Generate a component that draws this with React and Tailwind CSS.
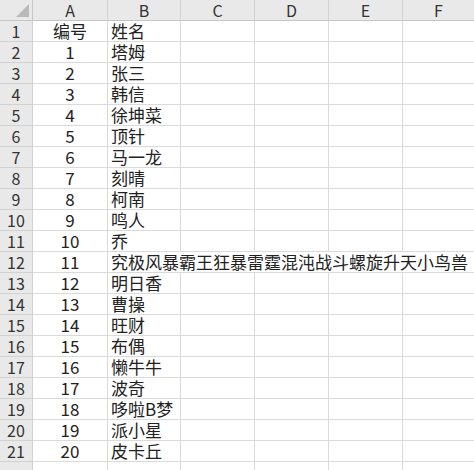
import React from 'react';

const names = [
  '塔姆', '张三', '韩信', '徐坤菜', '顶针', '马一龙', '刻晴', '柯南', '鸣人', '乔',
  '究极风暴霸王狂暴雷霆混沌战斗螺旋升天小鸟兽', '明日香', '曹操', '旺财', '布偶',
  '懒牛牛', '波奇', '哆啦B梦', '派小星', '皮卡丘',
];

const cols = ['A', 'B', 'C', 'D', 'E', 'F'];
const font = { fontFamily: '"Noto Sans CJK SC", "Noto Sans", sans-serif' };

function Row({ num, a, b, long }) {
  return (
    <>
      <div className="h-[21px] bg-[#e9e9e9] border-r border-b border-[#d2d2d2] text-[16px] leading-[20px] text-[#333] text-center">
        {num}
      </div>
      <div className="h-[21px] border-r border-b border-[#dadada] text-[17px] leading-[20px] text-[#222] text-center">
        {a}
      </div>
      <div
        className={
          'h-[21px] border-b border-[#dadada] text-[17px] leading-[20px] text-[#222] pl-[3px] whitespace-nowrap relative z-10 ' +
          (long ? 'overflow-visible' : 'border-r overflow-hidden')
        }
      >
        {b}
      </div>
      {[0, 1, 2, 3].map((i) => (
        <div
          key={i}
          className={'h-[21px] border-b border-[#dadada] ' + (long ? '' : i < 3 ? 'border-r' : '')}
        />
      ))}
    </>
  );
}

export default function App() {
  return (
    <div className="w-[474px] h-[470px] overflow-hidden bg-white" style={font}>
      <div className="grid grid-cols-[33px_75px_73px_74px_74px_74px_71px]">
        <div className="h-[21px] bg-[#e9e9e9] border-r border-b border-[#c6c6c6] relative">
          <svg className="absolute right-[3px] bottom-[3px]" width="13" height="13" viewBox="0 0 13 13">
            <polygon points="13,0 13,13 0,13" fill="#b9b9b9" />
          </svg>
        </div>
        {cols.map((c, i) => (
          <div
            key={c}
            className={
              'h-[21px] bg-[#e9e9e9] border-b border-[#c6c6c6] text-[16px] leading-[20px] text-[#333] text-center ' +
              (i < 5 ? 'border-r border-r-[#d2d2d2]' : '')
            }
          >
            {c}
          </div>
        ))}
        <Row num={1} a="编号" b="姓名" />
        {names.map((n, i) => (
          <Row key={i} num={i + 2} a={i + 1} b={n} long={i === 10} />
        ))}
        <div className="h-[21px] bg-[#e9e9e9] border-r border-[#d2d2d2]" />
        <div className="h-[21px] border-r border-[#dadada]" />
        <div className="h-[21px] border-r border-[#dadada]" />
        <div className="h-[21px] border-r border-[#dadada]" />
        <div className="h-[21px] border-r border-[#dadada]" />
        <div className="h-[21px] border-r border-[#dadada]" />
        <div className="h-[21px]" />
      </div>
    </div>
  );
}
